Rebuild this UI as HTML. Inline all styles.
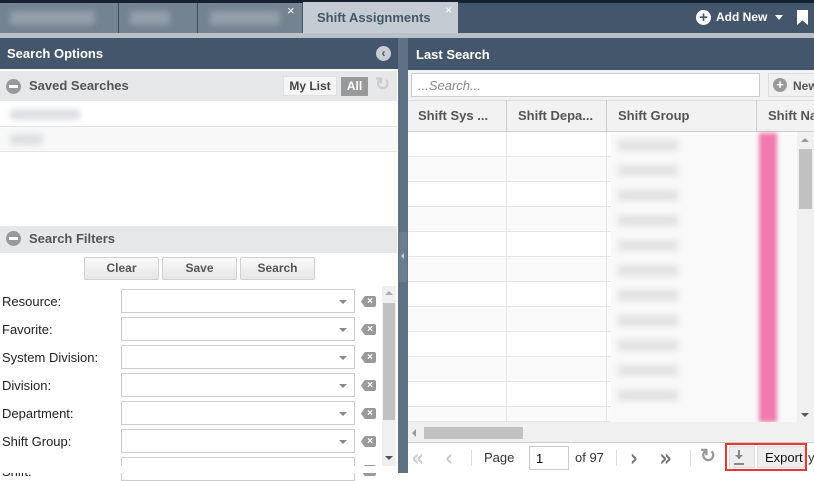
<!DOCTYPE html>
<html><head><style>
*{box-sizing:border-box;margin:0;padding:0}
body{width:814px;height:473px;overflow:hidden;position:relative;font-family:"Liberation Sans",Arial,sans-serif;font-size:13px;background:#fff}
.a{position:absolute;white-space:nowrap}
.b{font-weight:bold}
.blur{filter:blur(3px);background:#d4d8dc;border-radius:3px}
.btn{position:absolute;height:23px;border:1px solid #d0d0d0;border-radius:2px;background:linear-gradient(#fafafa,#e6e6e6);font-weight:bold;color:#555;text-align:center;line-height:21px;font-size:12px}
.lbl{position:absolute;left:2px;font-size:13px;color:#222}
.sel{position:absolute;left:121px;width:234px;height:24px;border:1px solid #ccc;background:#fff}
.sel:after{content:"";position:absolute;right:7px;top:10px;border:4px solid transparent;border-top:4px solid #888}
.clr{position:absolute;left:361px;width:15px;height:11px;background:#9a9a9a;border-radius:2px 2px 2px 2px;clip-path:polygon(25% 0,100% 0,100% 100%,25% 100%,0 50%);color:#fff;font-size:10px;line-height:11px;text-align:center;font-weight:bold;padding-left:3px}
.row{position:absolute;left:408px;width:389px;height:25px;border-bottom:1px solid #e6e6e6}
.gb{position:absolute;left:618px;width:60px;height:11px;background:#e2e2e2;filter:blur(3px)}
.pg{position:absolute;top:444px;font-size:24px;font-weight:bold;font-family:"DejaVu Sans",sans-serif;transform:scaleX(0.8)}
</style></head><body>
<!-- top bar -->
<div class="a" style="left:0;top:0;width:814px;height:3px;background:#15212e"></div>
<div class="a" style="left:0;top:3px;width:814px;height:30px;background:#44566b"></div>
<div class="a" style="left:0;top:3px;width:302px;height:30px;background:#748391"></div>
<div class="a" style="left:118px;top:3px;width:1px;height:30px;background:#3d4b58"></div>
<div class="a" style="left:197px;top:3px;width:1px;height:30px;background:#3d4b58"></div>
<div class="a blur" style="left:10px;top:11px;width:85px;height:14px;background:#929eaa"></div>
<div class="a blur" style="left:130px;top:11px;width:40px;height:14px;background:#929eaa"></div>
<div class="a blur" style="left:210px;top:11px;width:70px;height:14px;background:#929eaa"></div>
<div class="a" style="left:287px;top:3px;color:#fff;font-size:13px">×</div>
<div class="a" style="left:303px;top:2px;width:155px;height:31px;background:#c5cbd2"></div>
<div class="a b" style="left:317px;top:10px;color:#44566b;font-size:13px">Shift Assignments</div>
<div class="a" style="left:445px;top:3px;color:#fff;font-size:12px">×</div>
<div class="a" style="left:696px;top:10px;width:15px;height:15px;border-radius:50%;background:#fff;color:#44566b;font-weight:bold;text-align:center;line-height:15px;font-size:15px">+</div>
<div class="a b" style="left:716px;top:10px;color:#fff;font-size:12px">Add New</div>
<div class="a" style="left:775px;top:15px;border:4px solid transparent;border-top:5px solid #fff"></div>
<div class="a" style="left:797px;top:10px;width:11px;height:15px;background:#fff;clip-path:polygon(0 0,100% 0,100% 100%,50% 70%,0 100%)"></div>
<div class="a" style="left:0;top:33px;width:814px;height:5px;background:#b9c0c8"></div>
<!-- left panel -->
<div class="a" style="left:0;top:38px;width:398px;height:31px;background:#44566b"></div>
<div class="a b" style="left:7px;top:46px;color:#fff;font-size:13px">Search Options</div>
<div class="a" style="left:376px;top:46px;width:15px;height:15px;border-radius:50%;background:#c8ced4;color:#44566b;font-size:12px;font-weight:bold;text-align:center;line-height:14px">‹</div>
<div class="a" style="left:0;top:71px;width:397px;height:30px;background:#e6e7e8"></div>
<div class="a" style="left:6px;top:79px;width:15px;height:15px;border-radius:50%;background:#999"><div style="margin:6px 3px;height:3px;background:#fff"></div></div>
<div class="a b" style="left:29px;top:78px;color:#555">Saved Searches</div>
<div class="a b" style="left:283px;top:76px;width:54px;height:20px;background:#f5f5f5;border:1px solid #e0e0e0;text-align:center;line-height:18px;color:#444;font-size:12px">My List</div>
<div class="a b" style="left:341px;top:77px;width:27px;height:19px;background:#999;color:#fff;text-align:center;line-height:19px;font-size:12px">All</div>
<div class="a" style="left:375px;top:74px;color:#ccc;font-size:18px;font-weight:bold">↻</div>
<div class="a" style="left:0;top:126px;width:397px;height:26px;background:#f8f8f8;border-top:1px solid #e5e5e5;border-bottom:1px solid #e5e5e5"></div>
<div class="a blur" style="left:10px;top:109px;width:70px;height:11px;background:#dde0e3"></div>
<div class="a blur" style="left:10px;top:134px;width:33px;height:11px;background:#dde0e3"></div>
<div class="a" style="left:0;top:226px;width:397px;height:27px;background:#e6e7e8"></div>
<div class="a" style="left:6px;top:231px;width:15px;height:15px;border-radius:50%;background:#999"><div style="margin:6px 3px;height:3px;background:#fff"></div></div>
<div class="a b" style="left:29px;top:231px;color:#555">Search Filters</div>
<div class="btn" style="left:84px;top:257px;width:75px">Clear</div>
<div class="btn" style="left:162px;top:257px;width:75px">Save</div>
<div class="btn" style="left:240px;top:257px;width:75px">Search</div>
<div class="lbl" style="top:294px">Resource:</div><div class="sel" style="top:289px"></div><div class="clr" style="top:296px">×</div>
<div class="lbl" style="top:322px">Favorite:</div><div class="sel" style="top:317px"></div><div class="clr" style="top:324px">×</div>
<div class="lbl" style="top:350px">System Division:</div><div class="sel" style="top:345px"></div><div class="clr" style="top:352px">×</div>
<div class="lbl" style="top:378px">Division:</div><div class="sel" style="top:373px"></div><div class="clr" style="top:380px">×</div>
<div class="lbl" style="top:406px">Department:</div><div class="sel" style="top:401px"></div><div class="clr" style="top:408px">×</div>
<div class="lbl" style="top:434px">Shift Group:</div><div class="sel" style="top:429px"></div><div class="clr" style="top:436px">×</div>
<div class="lbl" style="top:464px">Shift:</div><div class="sel" style="top:457px"></div><div class="clr" style="top:465px">×</div>
<div class="a" style="left:0;top:466px;width:382px;height:7px;background:#fff"></div>
<div class="a" style="left:382px;top:286px;width:14px;height:180px;background:#f0f0f0"></div>
<div class="a" style="left:383px;top:303px;width:12px;height:117px;background:#c1c1c1"></div>
<div class="a" style="left:385px;top:291px;border:4px solid transparent;border-bottom:4px solid #aaa;border-top:0"></div>
<div class="a" style="left:385px;top:456px;border:4px solid transparent;border-top:4px solid #555;border-bottom:0"></div>
<!-- splitter -->
<div class="a" style="left:398px;top:38px;width:10px;height:435px;background:#5f7184"></div>
<div class="a" style="left:399px;top:232px;width:8px;height:50px;background:#6c7d8f"></div>
<div class="a" style="left:401px;top:253px;border:3px solid transparent;border-right:3px solid #c8ced4;border-left:0"></div>
<!-- right panel -->
<div class="a" style="left:408px;top:38px;width:406px;height:32px;background:#44566b"></div>
<div class="a b" style="left:416px;top:47px;color:#fff">Last Search</div>
<div class="a" style="left:408px;top:70px;width:406px;height:30px;background:#f2f2f2"></div>
<div class="a" style="left:411px;top:73px;width:349px;height:24px;border:1px solid #ccc;background:#fff;font-style:italic;color:#888;padding:4px 6px;font-size:13px">...Search...</div>
<div class="a" style="left:768px;top:73px;width:50px;height:24px;border:1px solid #ddd;background:#f0f0f0"></div>
<div class="a" style="left:773px;top:78px;width:14px;height:14px;border-radius:50%;background:#999;color:#fff;text-align:center;line-height:14px;font-weight:bold">+</div>
<div class="a b" style="left:793px;top:79px;color:#555;font-size:12px">New</div>
<div class="a" style="left:408px;top:100px;width:406px;height:32px;background:#f2f2f2;border-top:1px solid #ddd;border-bottom:1px solid #ccc"></div>
<div class="a" style="left:506px;top:100px;width:1px;height:32px;background:#ccc"></div>
<div class="a" style="left:606px;top:100px;width:1px;height:32px;background:#ccc"></div>
<div class="a" style="left:756px;top:100px;width:1px;height:32px;background:#ccc"></div>
<div class="a b" style="left:418px;top:108px;color:#555">Shift Sys ...</div>
<div class="a b" style="left:518px;top:108px;color:#555">Shift Depa...</div>
<div class="a b" style="left:618px;top:108px;color:#555">Shift Group</div>
<div class="a b" style="left:768px;top:108px;color:#555">Shift Na</div>
<div class="a" style="left:408px;top:132px;width:389px;height:290px;background:#fff"></div>
<div class="row" style="top:132px"></div><div class="row" style="top:157px;background:#fafafa"></div>
<div class="row" style="top:182px"></div><div class="row" style="top:207px;background:#fafafa"></div>
<div class="row" style="top:232px"></div><div class="row" style="top:257px;background:#fafafa"></div>
<div class="row" style="top:282px"></div><div class="row" style="top:307px;background:#fafafa"></div>
<div class="row" style="top:332px"></div><div class="row" style="top:357px;background:#fafafa"></div>
<div class="row" style="top:382px"></div><div class="row" style="top:407px;background:#fafafa;height:15px"></div>
<div class="a" style="left:506px;top:132px;width:1px;height:290px;background:#e6e6e6"></div>
<div class="a" style="left:606px;top:132px;width:1px;height:290px;background:#e6e6e6"></div>
<div class="a" style="left:611px;top:133px;width:186px;height:289px;background:#f9f9f9"></div>
<div class="gb" style="top:140px"></div><div class="gb" style="top:165px"></div>
<div class="gb" style="top:190px"></div><div class="gb" style="top:215px"></div>
<div class="gb" style="top:240px"></div><div class="gb" style="top:265px"></div>
<div class="gb" style="top:290px"></div><div class="gb" style="top:315px"></div>
<div class="gb" style="top:340px"></div><div class="gb" style="top:365px"></div>
<div class="gb" style="top:390px"></div>
<div class="a" style="left:759px;top:133px;width:18px;height:289px;background:#f07aaf;filter:blur(2px)"></div>
<div class="a" style="left:797px;top:132px;width:17px;height:290px;background:#f0f0f0"></div>
<div class="a" style="left:799px;top:149px;width:13px;height:60px;background:#c1c1c1"></div>
<div class="a" style="left:801px;top:138px;border:4px solid transparent;border-bottom:4px solid #999;border-top:0"></div>
<div class="a" style="left:801px;top:413px;border:4px solid transparent;border-top:4px solid #555;border-bottom:0"></div>
<div class="a" style="left:408px;top:422px;width:406px;height:20px;background:#f0f0f0"></div>
<div class="a" style="left:424px;top:427px;width:99px;height:12px;background:#c1c1c1"></div>
<div class="a" style="left:412px;top:429px;border:4px solid transparent;border-right:4px solid #999;border-left:0"></div>
<!-- pager -->
<div class="a" style="left:408px;top:442px;width:406px;height:31px;background:#fff;border-top:1px solid #ccc"></div>
<div class="pg" style="left:410px;color:#ccc">«</div>
<div class="pg" style="left:444px;color:#ccc">‹</div>
<div class="a" style="left:471px;top:450px;width:1px;height:16px;background:#ddd"></div>
<div class="a" style="left:484px;top:450px;color:#333">Page</div>
<div class="a" style="left:529px;top:446px;width:40px;height:24px;border:1px solid #ccc;padding:4px 6px;color:#000">1</div>
<div class="a" style="left:575px;top:450px;color:#333">of 97</div>
<div class="a" style="left:616px;top:450px;width:1px;height:16px;background:#ddd"></div>
<div class="pg" style="left:629px;color:#777">›</div>
<div class="pg" style="left:658px;color:#777">»</div>
<div class="a" style="left:690px;top:450px;width:1px;height:16px;background:#ddd"></div>
<div class="a" style="left:700px;top:445px;color:#999;font-size:19px;font-weight:bold">↻</div>
<div class="a" style="left:725px;top:443px;width:82px;height:28px;border:2px solid #e53935"></div>
<div class="a" style="left:729px;top:446px;width:26px;height:22px;background:#eee;border:1px solid #ddd"></div>
<div class="a" style="left:738px;top:450px;width:2px;height:9px;background:#888"></div>
<div class="a" style="left:735px;top:455px;border:4px solid transparent;border-top:4px solid #888"></div>
<div class="a" style="left:734px;top:463px;width:10px;height:2px;background:#888"></div>
<div class="a" style="left:757px;top:446px;width:48px;height:22px;background:#eee;border:1px solid #ddd"></div>
<div class="a" style="left:765px;top:450px;color:#111">Export</div>
<div class="a" style="left:808px;top:450px;color:#333">y</div>
</body></html>
